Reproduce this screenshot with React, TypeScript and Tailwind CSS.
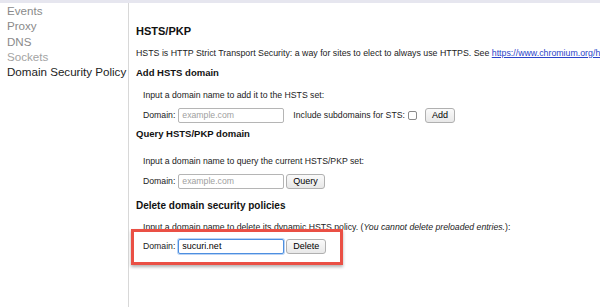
const font = { fontFamily: '"Liberation Sans", Arial, sans-serif' };

const sideItems = [
  { label: "Events", cls: "text-[#8a8a8a]" },
  { label: "Proxy", cls: "text-[#8a8a8a]" },
  { label: "DNS", cls: "text-[#8a8a8a]" },
  { label: "Sockets", cls: "text-[#a3a3a3]" },
  { label: "Domain Security Policy", cls: "text-[#222]" },
];

const TextInput = ({ placeholder, value, focused }: { placeholder?: string; value?: string; focused?: boolean }) => (
  <div
    className={`w-[106px] h-[15px] rounded-[2px] bg-white flex items-center px-[3px] text-[8.7px] leading-none ${
      focused ? "border-[1.5px] border-[#4d8fe0] shadow-[0_0_0_1px_#b9d3f5]" : "border border-[#b5b5b5]"
    }`}
  >
    {value ? <span className="text-black text-[9px]">{value}</span> : <span className="text-[#a0a0a0]">{placeholder}</span>}
  </div>
);

const Btn = ({ label }: { label: string }) => (
  <div className="h-[15px] px-[6px] ml-[2px] rounded-[3px] border border-[#b0b0b0] bg-gradient-to-b from-[#fafafa] to-[#e8e8e8] flex items-center text-[9px] text-black leading-none">
    {label}
  </div>
);

export default function App() {
  return (
    <div className="w-[600px] h-[307px] bg-white overflow-hidden flex flex-col" style={font}>
      <div className="h-[3px] bg-[#e6e6ef] shrink-0" />
      <div className="flex flex-1 min-h-0">
        <div className="w-[129px] shrink-0 border-r border-[#d8d8d8] pl-[7px] whitespace-nowrap">
          <div className="mt-[0px]">
            {sideItems.map((s) => (
              <div key={s.label} className={`text-[11.6px] leading-[15.3px] ${s.cls}`}>
                {s.label}
              </div>
            ))}
          </div>
        </div>
        <div className="flex-1 min-w-0 pl-[7px] pt-[22px] text-[#222] whitespace-nowrap">
          <div className="text-[11px] font-bold leading-[13px] text-[#111]">HSTS/PKP</div>
          <div className="mt-[10px] text-[8.8px] leading-[11px]">
            HSTS is HTTP Strict Transport Security: a way for sites to elect to always use HTTPS. See{" "}
            <span className="text-[#2b44c9] underline">https://www.chromium.org/hsts</span>
          </div>

          <div className="mt-[8px] text-[9.5px] font-bold leading-[11px] text-[#111]">Add HSTS domain</div>
          <div className="mt-[12px] pl-[7px] text-[8.7px] leading-[11px]">Input a domain name to add it to the HSTS set:</div>
          <div className="mt-[7px] pl-[7px] flex items-center text-[8.7px]">
            <span className="mr-[3px]">Domain:</span>
            <TextInput placeholder="example.com" />
            <span className="ml-[9px] mr-[3px]">Include subdomains for STS:</span>
            <div className="w-[9px] h-[9px] border border-[#8a8a8a] rounded-[2px] bg-white mr-[6px]" />
            <Btn label="Add" />
          </div>

          <div className="mt-[5px] text-[9.5px] font-bold leading-[11px] text-[#111]">Query HSTS/PKP domain</div>
          <div className="mt-[17px] pl-[7px] text-[8.7px] leading-[11px]">Input a domain name to query the current HSTS/PKP set:</div>
          <div className="mt-[7px] pl-[7px] flex items-center text-[8.7px]">
            <span className="mr-[3px]">Domain:</span>
            <TextInput placeholder="example.com" />
            <Btn label="Query" />
          </div>

          <div className="mt-[11px] text-[10px] font-bold leading-[11px] text-[#111]">Delete domain security policies</div>
          <div className="mt-[11px] pl-[7px] text-[8.7px] leading-[11px]">
            Input a domain name to delete its dynamic HSTS policy. (<i>You cannot delete preloaded entries.</i>):
          </div>
          <div className="relative mt-[6px] ml-[7px] flex items-center text-[8.7px] w-fit">
            <div className="absolute left-[-12px] top-[-10px] w-[212px] h-[36px] border-[3px] border-[#ea5045] shadow-[0_2px_3px_rgba(0,0,0,0.3)]" />
            <span className="mr-[3px]">Domain:</span>
            <TextInput value="sucuri.net" focused />
            <Btn label="Delete" />
          </div>
        </div>
      </div>
    </div>
  );
}
